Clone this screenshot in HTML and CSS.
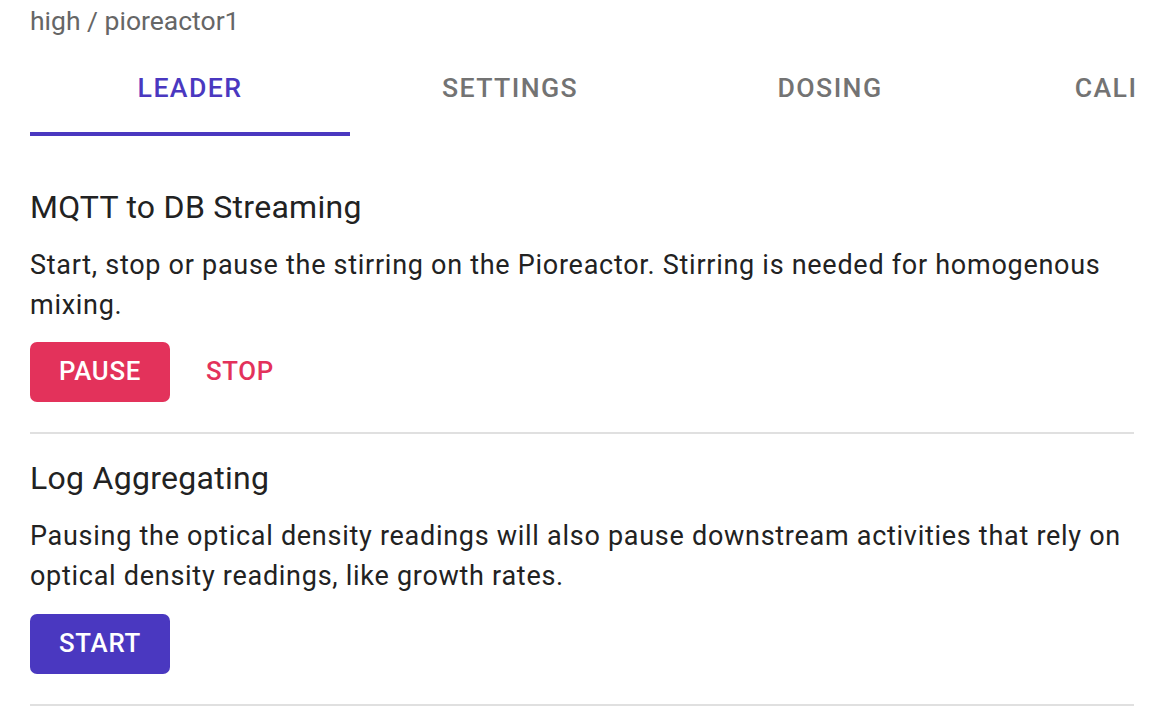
FILE: index.html
```html
<!DOCTYPE html>
<html lang="en">
<head>
<meta charset="utf-8">
<title>Pioreactor settings</title>
<link rel="stylesheet" href="styles.css">
</head>
<body>
  <div class="page">
    <div class="crumb">high / pioreactor1</div>
    <nav class="tabs">
      <div class="tab active">Leader</div>
      <div class="tab">Settings</div>
      <div class="tab">Dosing</div>
      <div class="tab">Calibrate</div>
    </nav>
    <section class="job first">
      <h2 class="job-title">MQTT to DB Streaming</h2>
      <p class="job-desc">Start, stop or pause the stirring on the Pioreactor. Stirring is needed for homogenous mixing.</p>
      <div class="actions">
        <button class="btn btn-contained btn-pink">Pause</button>
        <button class="btn btn-text btn-pink-text">Stop</button>
      </div>
    </section>
    <section class="job">
      <h2 class="job-title">Log Aggregating</h2>
      <p class="job-desc">Pausing the optical density readings will also pause downstream activities that rely on optical density readings, like growth rates.</p>
      <div class="actions">
        <button class="btn btn-contained btn-purple">Start</button>
      </div>
    </section>
  </div>
</body>
</html>
```

FILE: styles.css
```css
html, body {
  margin: 0;
  padding: 0;
  background: #ffffff;
}

body {
  font-family: Roboto, "Liberation Sans", Arial, sans-serif;
  color: #222222;
  overflow: hidden;
}

.page {
  width: 1104px;
  padding: 1px 0 0 30px;
}

.crumb {
  font-size: 26.5px;
  line-height: 40px;
  color: #666666;
}

.tabs {
  display: flex;
  overflow: hidden;
  width: 1105px;
}

.tab {
  flex: 0 0 320px;
  box-sizing: border-box;
  text-align: center;
  text-transform: uppercase;
  font-size: 26.67px;
  font-weight: 500;
  letter-spacing: 1.4px;
  line-height: 32px;
  white-space: nowrap;
  color: #737373;
  padding-top: 31px;
  height: 95px;
  border-bottom: 4px solid transparent;
}

.tab.active {
  color: #4a38c0;
  border-bottom-color: #4a38c0;
}

.job {
  padding-top: 19.6px;
  border-bottom: 2px solid #e0e0e0;
  padding-bottom: 30px;
}

.job.first {
  padding-top: 46.6px;
}

.job-title {
  margin: 0;
  font-size: 32px;
  font-weight: 400;
  letter-spacing: 0.28px;
  line-height: 48px;
  color: #222222;
}

.job-desc {
  margin: 14px 0 0;
  font-size: 27px;
  line-height: 40px;
  letter-spacing: 0.72px;
  color: #222222;
}

.actions {
  display: flex;
  align-items: center;
  gap: 16.67px;
  margin-top: 17.4px;
}

.job + .job .actions {
  margin-top: 18.4px;
}

.btn {
  font-family: Roboto, "Liberation Sans", Arial, sans-serif;
  font-size: 25.8px;
  font-weight: 500;
  letter-spacing: 0.74px;
  text-transform: uppercase;
  border: none;
  border-radius: 7px;
  height: 60px;
  min-width: 106.67px;
  padding: 0 26.67px;
  cursor: pointer;
  line-height: 1;
}

.btn-contained {
  width: 140px;
  color: #ffffff;
}

.btn-pink {
  background: #e3325b;
}

.btn-purple {
  background: #4a38c0;
}

.btn-text {
  background: transparent;
  padding: 0 13.33px;
}

.btn-pink-text {
  color: #e3325b;
}
```
